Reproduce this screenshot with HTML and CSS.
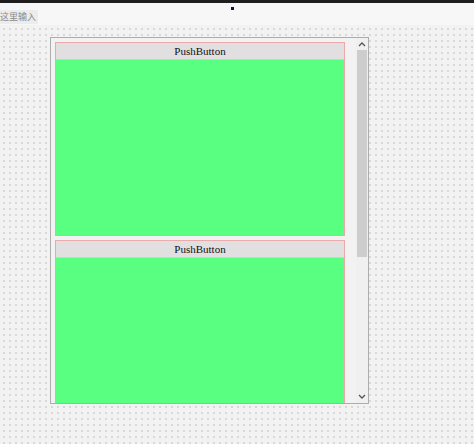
FILE: index.html
```html
<!DOCTYPE html>
<html>
<head>
<meta charset="utf-8">
<link rel="stylesheet" href="styles.css">
</head>
<body>
<div class="titlebar"></div>
<div class="toolbar">
  <div class="lineedit">这里输入</div>
  <div class="marker"></div>
</div>
<div class="canvas">
  <div class="scroll">
    <div class="viewport">
      <div class="block">
        <div class="btn">PushButton</div>
        <div class="green g1"></div>
      </div>
      <div class="block">
        <div class="btn">PushButton</div>
        <div class="green g2"></div>
      </div>
    </div>
    <div class="scrollbar">
      <div class="arrow">
        <svg width="8" height="6" viewBox="0 0 8 6"><polyline points="1,5 4,2 7,5" fill="none" stroke="#555" stroke-width="1.3"/></svg>
      </div>
      <div class="thumb"></div>
      <div class="track"></div>
      <div class="arrow">
        <svg width="8" height="6" viewBox="0 0 8 6"><polyline points="1,1 4,4 7,1" fill="none" stroke="#555" stroke-width="1.3"/></svg>
      </div>
    </div>
  </div>
</div>
</body>
</html>
```
FILE: styles.css
```css
html, body {
  margin: 0;
  padding: 0;
  width: 474px;
  height: 444px;
  overflow: hidden;
  background: #f0f0f0;
}
.titlebar {
  height: 3px;
  background: #1f1f1f;
}
.toolbar {
  height: 22px;
  background: #f7f7f7;
  display: flex;
  align-items: flex-start;
}
.lineedit {
  margin-top: 7px;
  width: 38px;
  height: 14px;
  background: #ececec;
  color: #8a8a8a;
  font-family: "Noto Sans CJK SC", sans-serif;
  font-size: 9px;
  line-height: 14px;
  white-space: nowrap;
  overflow: hidden;
}
.marker {
  margin-left: 193px;
  margin-top: 4px;
  width: 3px;
  height: 3px;
  background: #10105a;
}
.canvas {
  height: 419px;
  box-sizing: border-box;
  padding-top: 12px;
  padding-left: 50px;
  background-color: #f2f2f2;
  background-image: radial-gradient(circle, #d2d2d2 0.6px, transparent 1.1px);
  background-size: 6px 6px;
  background-position: 1px 1px;
}
.scroll {
  width: 319px;
  height: 367px;
  box-sizing: border-box;
  border: 1px solid #adadad;
  background: #f2f2f2;
  display: flex;
}
.viewport {
  flex: 1;
  padding: 4px 11px 0 4px;
  overflow: hidden;
  display: flex;
  flex-direction: column;
  gap: 4px;
}
.block {
  flex: none;
  width: 290px;
  box-sizing: border-box;
  border: 1px solid #eaa9aa;
  display: flex;
  flex-direction: column;
}
.btn {
  height: 17px;
  background: #e1dfe0;
  border-bottom: 1px solid #cfcfcf;
  box-sizing: border-box;
  text-align: center;
  font-family: "Liberation Serif", serif;
  font-size: 11px;
  line-height: 16px;
  color: #111;
}
.green {
  background: #58ff80;
}
.g1 {
  height: 175px;
}
.g2 {
  height: 175px;
}
.scrollbar {
  width: 12px;
  flex: none;
  display: flex;
  flex-direction: column;
  background: #f0f0f0;
}
.arrow {
  height: 12px;
  display: flex;
  align-items: center;
  justify-content: center;
}
.thumb {
  height: 207px;
  margin: 0 1px;
  background: #cdcdcd;
}
.track {
  flex: 1;
}
```
